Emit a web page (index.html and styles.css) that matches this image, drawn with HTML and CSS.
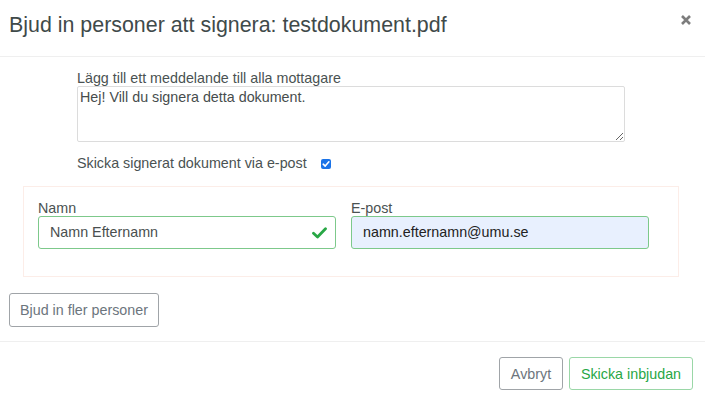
FILE: index.html
```html
<!DOCTYPE html>
<html lang="sv">
<head>
<meta charset="utf-8">
<title>Bjud in personer</title>
<link rel="stylesheet" href="styles.css">
</head>
<body>
<div class="modal">
  <header class="modal-header">
    <h4 class="modal-title">Bjud in personer att signera: testdokument.pdf</h4>
    <button class="close" type="button" aria-label="Stäng">
      <svg width="10" height="10" viewBox="0 0 10 10"><path d="M1 1 L9 9 M9 1 L1 9" stroke="#7d7d7d" stroke-width="2.6" fill="none"/></svg>
    </button>
  </header>
  <main class="modal-body">
    <div class="message">
      <label class="label" for="msg">Lägg till ett meddelande till alla mottagare</label>
      <textarea id="msg" class="textarea">Hej! Vill du signera detta dokument.</textarea>
      <div class="check-row">
        <span class="check-text">Skicka signerat dokument via e-post</span>
        <span class="checkbox">
          <svg width="10" height="10" viewBox="0 0 10 10"><path d="M2.2 5.2 L4.2 7.1 L7.9 2.8" stroke="#fff" stroke-width="1.6" fill="none" stroke-linecap="round" stroke-linejoin="round"/></svg>
        </span>
      </div>
    </div>
    <div class="card">
      <div class="field">
        <span class="label">Namn</span>
        <div class="input-wrap">
          <div class="input valid">Namn Efternamn</div>
          <svg class="valid-icon" width="15" height="12" viewBox="0 0 15 12"><path d="M1.5 6.2 L5.5 10 L13.5 1.8" stroke="#28a745" stroke-width="2.8" fill="none" stroke-linecap="round" stroke-linejoin="round"/></svg>
        </div>
      </div>
      <div class="field">
        <span class="label">E-post</span>
        <div class="input-wrap">
          <div class="input autofill">namn.efternamn@umu.se</div>
        </div>
      </div>
    </div>
    <button class="btn btn-grey btn-more" type="button">Bjud in fler personer</button>
  </main>
  <footer class="modal-footer">
    <button class="btn btn-grey" type="button">Avbryt</button>
    <button class="btn btn-green" type="button">Skicka inbjudan</button>
  </footer>
</div>
</body>
</html>
```
FILE: styles.css
```css
* { box-sizing: border-box; }

html, body {
  margin: 0;
  background: #ffffff;
  font-family: "Liberation Sans", Arial, sans-serif;
  color: #4a5252;
}

.modal {
  width: 705px;
  height: 403px;
  display: flex;
  flex-direction: column;
}

.modal-header {
  height: 57px;
  display: flex;
  align-items: flex-start;
  justify-content: space-between;
  padding: 13px 14px 0 9px;
  border-bottom: 1px solid #efefef;
}

.modal-title {
  margin: 0;
  font-size: 21.4px;
  line-height: 24px;
  font-weight: normal;
  color: #3f4a4a;
}

.close {
  margin-top: 2px;
  padding: 0;
  border: 0;
  background: none;
  width: 10px;
  height: 10px;
  display: flex;
}

.modal-body {
  padding: 13px 9px 14px 9px;
  border-bottom: 1px solid #efefef;
}

.message {
  margin-left: 68px;
  width: 548px;
}

.label {
  display: block;
  font-size: 14.3px;
  line-height: 16px;
  color: #4a5252;
}

.textarea {
  display: block;
  width: 548px;
  height: 56px;
  margin: 0;
  padding: 2px 2px;
  border: 1px solid #dcdcdc;
  border-radius: 2px;
  font-family: "Liberation Sans", Arial, sans-serif;
  font-size: 14.3px;
  line-height: 16px;
  color: #474d4d;
  resize: vertical;
}

.check-row {
  margin-top: 13px;
  display: flex;
  align-items: center;
  gap: 14px;
  height: 16px;
}

.check-text {
  font-size: 14.3px;
  line-height: 16px;
}

.checkbox {
  width: 10px;
  height: 10px;
  border-radius: 2px;
  background: #1a73e8;
  display: flex;
  margin-top: 1px;
}

.card {
  margin: 15px 0 0 14px;
  width: 656px;
  height: 91px;
  border: 1px solid #fcede8;
  padding: 13px 14px 0 14px;
  display: grid;
  grid-template-columns: 298px 298px;
  column-gap: 15px;
  align-content: start;
}

.input-wrap {
  position: relative;
}

.input {
  height: 33px;
  border: 1px solid #7dc98b;
  border-radius: 3px;
  padding: 0 11px;
  font-size: 14.3px;
  line-height: 31px;
  color: #4a4f4f;
  white-space: nowrap;
}

.input.autofill {
  background: #e8f0fe;
  color: #222;
}

.valid-icon {
  position: absolute;
  right: 9px;
  top: 11px;
}

.btn {
  font-family: "Liberation Sans", Arial, sans-serif;
  font-size: 14.3px;
  background: #fff;
  border-radius: 3px;
  height: 33px;
  padding: 0;
  white-space: nowrap;
  cursor: pointer;
}

.btn-grey {
  border: 1px solid #a0a4a8;
  color: #6c757d;
}

.btn-green {
  border: 1px solid #9ad7a7;
  color: #28a745;
}

.btn-more {
  display: block;
  margin-top: 16px;
  width: 150px;
  height: 34px;
}

.modal-footer {
  display: flex;
  justify-content: flex-end;
  gap: 6px;
  padding: 15px 12px 0 0;
}

.modal-footer .btn-grey { width: 64px; }
.modal-footer .btn-green { width: 124px; }
```
